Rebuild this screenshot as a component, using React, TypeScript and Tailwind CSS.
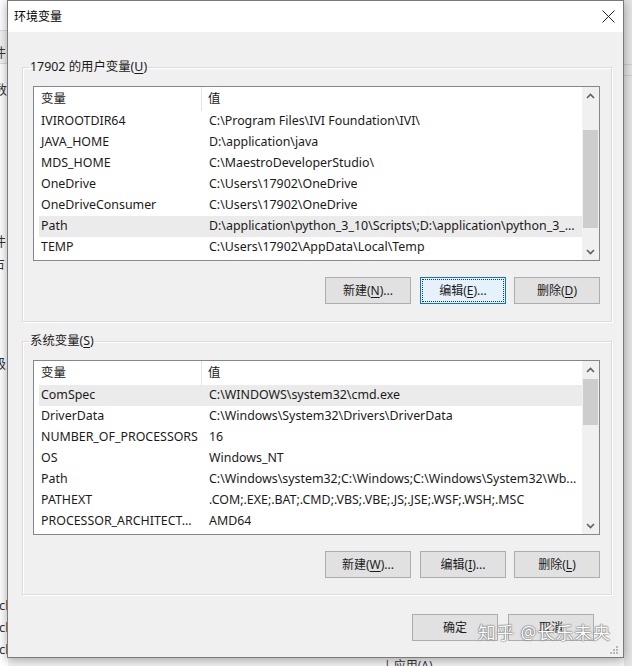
import React from "react";

const FONT = { fontFamily: '"Noto Sans", "Noto Sans CJK SC", sans-serif' };

type Row = [string, string];

const userVars: Row[] = [
  ["IVIROOTDIR64", "C:\\Program Files\\IVI Foundation\\IVI\\"],
  ["JAVA_HOME", "D:\\application\\java"],
  ["MDS_HOME", "C:\\MaestroDeveloperStudio\\"],
  ["OneDrive", "C:\\Users\\17902\\OneDrive"],
  ["OneDriveConsumer", "C:\\Users\\17902\\OneDrive"],
  ["Path", "D:\\application\\python_3_10\\Scripts\\;D:\\application\\python_3_..."],
  ["TEMP", "C:\\Users\\17902\\AppData\\Local\\Temp"],
];

const sysVars: Row[] = [
  ["ComSpec", "C:\\WINDOWS\\system32\\cmd.exe"],
  ["DriverData", "C:\\Windows\\System32\\Drivers\\DriverData"],
  ["NUMBER_OF_PROCESSORS", "16"],
  ["OS", "Windows_NT"],
  ["Path", "C:\\Windows\\system32;C:\\Windows;C:\\Windows\\System32\\Wb..."],
  ["PATHEXT", ".COM;.EXE;.BAT;.CMD;.VBS;.VBE;.JS;.JSE;.WSF;.WSH;.MSC"],
  ["PROCESSOR_ARCHITECT...", "AMD64"],
];

function Chevron({ up }: { up?: boolean }) {
  return (
    <svg width="9" height="6" viewBox="0 0 9 6">
      <path
        d={up ? "M1 5 L4.5 1.5 L8 5" : "M1 1 L4.5 4.5 L8 1"}
        fill="none"
        stroke="#606060"
        strokeWidth="1.6"
      />
    </svg>
  );
}

function ListBox({
  rows,
  selected,
  thumbTop,
  thumbHeight,
}: {
  rows: Row[];
  selected: number;
  thumbTop: number;
  thumbHeight: number;
}) {
  return (
    <div className="ml-[10px] flex h-[175px] w-[567px] border border-[#828790] bg-white">
      <div className="flex-1 overflow-hidden">
        <div className="flex h-[24px] items-center text-[12.4px] text-[#1a1a1a]">
          <div className="flex h-full w-[168px] items-center border-r border-[#e5e5e5] pl-[7px]">变量</div>
          <div className="pl-[6px]">值</div>
        </div>
        <div className="pl-[5px]">
          {rows.map(([k, v], i) => (
            <div
              key={i}
              className={`flex h-[21px] items-center whitespace-nowrap text-[12.4px] text-[#1a1a1a] ${
                i === selected ? "bg-[#ebebeb]" : ""
              }`}
            >
              <div className="w-[163px] overflow-hidden pl-[2px]">{k}</div>
              <div className="overflow-hidden pl-[7px]">{v}</div>
            </div>
          ))}
        </div>
      </div>
      <div className="flex w-[17px] flex-col items-center bg-[#f0f0f0]">
        <div className="flex h-[17px] w-full items-center justify-center">
          <Chevron up />
        </div>
        <div className="relative w-full flex-1">
          <div
            className="absolute left-[1px] w-[15px] bg-[#cdcdcd]"
            style={{ top: thumbTop, height: thumbHeight }}
          />
        </div>
        <div className="flex h-[17px] w-full items-center justify-center">
          <Chevron />
        </div>
      </div>
    </div>
  );
}

function Btn({
  children,
  focused,
  className = "",
}: {
  children: React.ReactNode;
  focused?: boolean;
  className?: string;
}) {
  return (
    <div
      className={`flex h-[27px] w-[86px] items-center justify-center text-[12px] text-[#1a1a1a] ${
        focused ? "border border-[#0078d7] bg-[#e5f1fb] p-[2px]" : "border border-[#adadad] bg-[#e1e1e1]"
      } ${className}`}
    >
      {focused ? (
        <div className="flex h-full w-full items-center justify-center outline-1 outline-dotted outline-[#333]">
          {children}
        </div>
      ) : (
        children
      )}
    </div>
  );
}

function U({ c }: { c: string }) {
  return <span className="underline underline-offset-2">{c}</span>;
}

export default function App() {
  return (
    <div className="relative h-[666px] w-[632px] overflow-hidden bg-[#f5f5f5]" style={FONT}>
      {/* background window fragments */}
      <div className="absolute left-0 top-0 h-full w-[8px] bg-white">
        <div className="h-[30px] bg-white" />
        <div className="h-[34px] border-y border-[#dcdcdc] bg-[#f3f3f3]" />
      </div>
      <div className="absolute left-[-7px] top-[43px] text-[13px] text-[#333]">件</div>
      <div className="absolute left-[-6px] top-[80px] text-[13px] text-[#333]">数</div>
      <div className="absolute left-[-7px] top-[232px] text-[13px] text-[#333]">件</div>
      <div className="absolute left-[-8px] top-[254px] text-[13px] text-[#333]">占</div>
      <div className="absolute left-[-7px] top-[354px] text-[13px] text-[#333]">级</div>
      <div className="absolute left-[-1px] top-[596px] text-[13px] text-[#333]">cl</div>
      <div className="absolute left-[-1px] top-[618px] text-[13px] text-[#333]">cl</div>
      <div className="absolute left-[-1px] top-[640px] text-[13px] text-[#333]">cl</div>
      <div className="absolute right-0 top-0 h-full w-[8px] bg-[#e4e4e4]">
        <div className="mt-[64px] h-px bg-[#cfcfcf]" />
        <div className="mt-[10px] h-px bg-[#cfcfcf]" />
      </div>
      <div className="absolute left-[384px] top-[657px] text-[12px] text-[#333]">| 应用(A)</div>

      {/* dialog window */}
      <div className="absolute left-[7px] top-0 flex h-[658px] w-[617px] flex-col border border-[#7a7a7a] bg-[#f0f0f0] shadow-[0_2px_10px_rgba(0,0,0,0.35)]">
        <div className="flex h-[31px] items-center justify-between bg-white pl-[6px] pr-[8px] text-[12px] text-black">
          <span>环境变量</span>
          <svg width="13" height="13" viewBox="0 0 13 13">
            <path d="M0.5 0.5 L12.5 12.5 M12.5 0.5 L0.5 12.5" stroke="#222" strokeWidth="1" />
          </svg>
        </div>

        <fieldset className="ml-[14px] mt-[27px] w-[590px] border border-[#dcdcdc] pb-[17px] shadow-[inset_1px_1px_0_#fff,1px_1px_0_#fff]">
          <legend className="ml-[6px] px-[1px] text-[12.4px] leading-[16px] text-[#1a1a1a]">
            17902 的用户变量(<U c="U" />)
          </legend>
          <div className="mt-[11px]">
            <ListBox rows={userVars} selected={5} thumbTop={26} thumbHeight={98} />
          </div>
          <div className="mt-[16px] flex justify-end pr-[11px]">
            <Btn>
              新建(<U c="N" />)...
            </Btn>
            <Btn focused className="ml-[9px]">
              编辑(<U c="E" />)...
            </Btn>
            <Btn className="ml-[8px]">
              删除(<U c="D" />)
            </Btn>
          </div>
        </fieldset>

        <fieldset className="ml-[14px] mt-[11px] w-[590px] border border-[#dcdcdc] pb-[16px] shadow-[inset_1px_1px_0_#fff,1px_1px_0_#fff]">
          <legend className="ml-[6px] px-[1px] text-[12.4px] leading-[16px] text-[#1a1a1a]">
            系统变量(<U c="S" />)
          </legend>
          <div className="mt-[11px]">
            <ListBox rows={sysVars} selected={0} thumbTop={1} thumbHeight={46} />
          </div>
          <div className="mt-[16px] flex justify-end pr-[11px]">
            <Btn>
              新建(<U c="W" />)...
            </Btn>
            <Btn className="ml-[9px]">
              编辑(<U c="I" />)...
            </Btn>
            <Btn className="ml-[8px]">
              删除(<U c="L" />)
            </Btn>
          </div>
        </fieldset>

        <div className="mt-[19px] flex justify-end pr-[29px]">
          <Btn>确定</Btn>
          <Btn className="ml-[10px]">取消</Btn>
        </div>
      </div>

      {/* resize grip */}
      <div className="absolute left-[610px] top-[646px] grid grid-cols-3 gap-[1px]">
        {[0, 0, 1, 0, 1, 1, 1, 1, 1].map((v, i) => (
          <div key={i} className={`h-[2px] w-[2px] ${v ? "bg-[#b8b8b8]" : ""}`} />
        ))}
      </div>

      {/* watermark */}
      <div className="absolute left-[478px] top-[619px] text-[17.5px] tracking-[1px] text-white [text-shadow:0_0_1px_#666,0_0_1px_#666,0_0_2px_#888]">
        知乎 @长乐未央
      </div>
    </div>
  );
}
